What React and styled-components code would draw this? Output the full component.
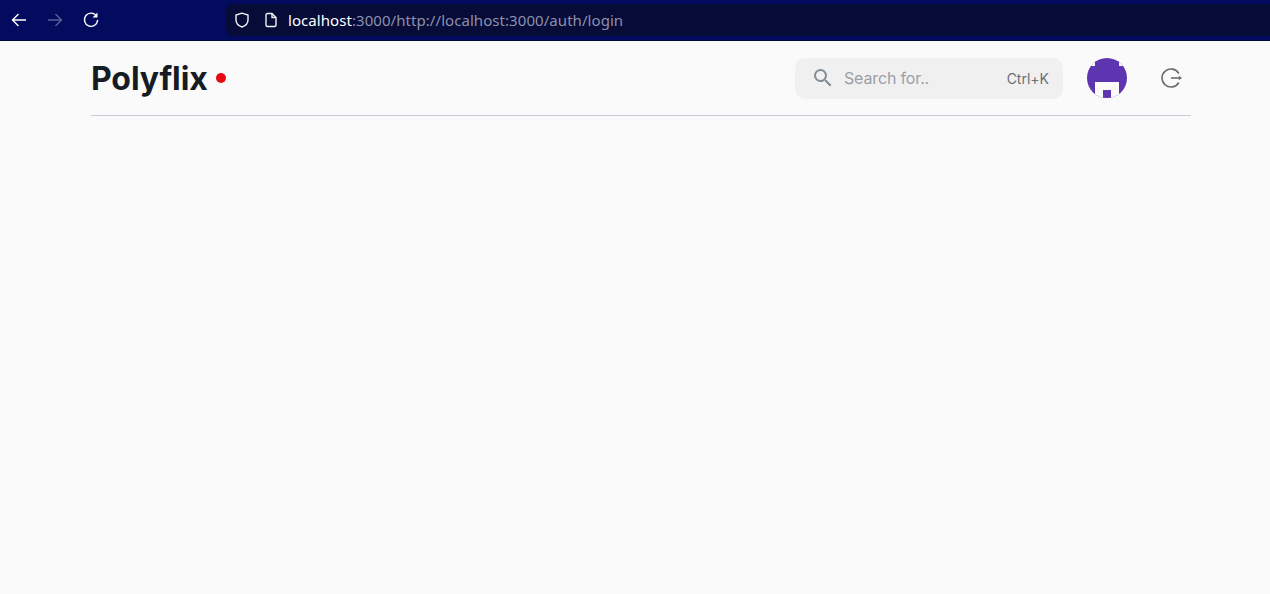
import React from "react";
import styled, { createGlobalStyle } from "styled-components";

const GlobalStyle = createGlobalStyle`
  html, body {
    margin: 0;
    padding: 0;
    height: 100%;
    background: #fafafa;
  }
  #root {
    height: 100%;
  }
`;

const Page = styled.div`
  display: flex;
  flex-direction: column;
  height: 594px;
  overflow: hidden;
  background: #fafafa;
`;

const BrowserBar = styled.div`
  display: flex;
  align-items: center;
  flex-shrink: 0;
  box-sizing: border-box;
  height: 41px;
  padding: 4px 0 4px 0;
  background: #020b5e;
  border-bottom: 1px solid #01063a;
`;

const NavButtons = styled.div`
  display: flex;
  align-items: center;
  gap: 18px;
  width: 226px;
  padding-left: 10px;
  box-sizing: border-box;
`;

const NavIcon = styled.svg`
  display: block;
  width: 18px;
  height: 18px;
  fill: none;
  stroke: ${(p) => (p.$dim ? "#5a5f96" : "#ffffff")};
  stroke-width: 1.4;
`;

const UrlBox = styled.div`
  flex: 1;
  display: flex;
  align-items: center;
  align-self: stretch;
  padding-left: 8px;
  background: #060b38;
  border-radius: 6px 0 0 6px;
`;

const UrlIcon = styled.svg`
  display: block;
  flex-shrink: 0;
  width: 16px;
  height: 16px;
  margin-right: ${(p) => p.$gap}px;
  fill: none;
  stroke: #f2f2f6;
  stroke-width: 1.4;
`;

const UrlText = styled.div`
  font-family: "Noto Sans", "Open Sans", sans-serif;
  font-size: 15px;
  letter-spacing: 0.06px;
  color: #8d90ad;
  white-space: nowrap;
`;

const UrlHost = styled.span`
  color: #ffffff;
`;

const Header = styled.header`
  display: flex;
  align-items: center;
  justify-content: space-between;
  box-sizing: border-box;
  height: 75px;
  margin: 0 79px 0 91px;
  border-bottom: 1px solid #c4cdd5;
`;

const Brand = styled.div`
  display: flex;
  align-items: center;
  gap: 8px;
`;

const Logo = styled.div`
  font-family: "Inter", "Liberation Sans", sans-serif;
  font-size: 32px;
  font-weight: 700;
  letter-spacing: -0.1px;
  color: #161c24;
`;

const Dot = styled.span`
  display: block;
  width: 10px;
  height: 10px;
  border-radius: 50%;
  background: #e50914;
`;

const HeaderRight = styled.div`
  display: flex;
  align-items: center;
`;

const SearchBox = styled.div`
  display: flex;
  align-items: center;
  box-sizing: border-box;
  width: 268px;
  height: 41px;
  padding: 0 14px 0 16px;
  border-radius: 10px;
  background: #f0f0f0;
`;

const SearchIcon = styled.svg`
  display: block;
  flex-shrink: 0;
  width: 24px;
  height: 24px;
  fill: #828d99;
`;

const SearchText = styled.span`
  flex: 1;
  margin-left: 9px;
  font-family: "Inter", "Roboto", sans-serif;
  font-size: 16px;
  letter-spacing: -0.15px;
  color: #9a9fa6;
`;

const Shortcut = styled.span`
  font-family: "Inter", "Roboto", sans-serif;
  font-size: 14px;
  color: #66707a;
`;

const Avatar = styled.svg`
  display: block;
  width: 40px;
  height: 40px;
  margin-left: 24px;
  border-radius: 50%;
`;

const LogoutIcon = styled.svg`
  display: block;
  width: 24px;
  height: 24px;
  margin-left: 33px;
  margin-right: 7px;
  fill: none;
  stroke: #6d6d6d;
  stroke-width: 1.6;
`;

export default function App() {
  return (
    <>
      <GlobalStyle />
      <Page>
        <BrowserBar>
          <NavButtons>
            <NavIcon viewBox="0 0 18 18">
              <path d="M16 9H2.5M8.5 3L2.5 9l6 6" />
            </NavIcon>
            <NavIcon viewBox="0 0 18 18" $dim>
              <path d="M2 9h13.5M9.5 3l6 6-6 6" />
            </NavIcon>
            <NavIcon viewBox="0 0 18 18">
              <path d="M14.6 5.2A6.6 6.6 0 1 0 15.6 9" />
              <path d="M15.5 1.5v5h-5z" fill="#ffffff" stroke="none" />
            </NavIcon>
          </NavButtons>
          <UrlBox>
            <UrlIcon viewBox="0 0 16 16" $gap={13}>
              <path d="M8 1.2L2 3v5c0 3.4 2.6 5.8 6 7 3.4-1.2 6-3.6 6-7V3z" />
            </UrlIcon>
            <UrlIcon viewBox="0 0 16 16" $gap={9}>
              <path d="M3 3a1.5 1.5 0 0 1 1.5-1.5H9L13 5.5V13a1.5 1.5 0 0 1-1.5 1.5h-7A1.5 1.5 0 0 1 3 13z" />
              <path d="M9 1.5v4h4" />
            </UrlIcon>
            <UrlText>
              <UrlHost>localhost</UrlHost>:3000/http://localhost:3000/auth/login
            </UrlText>
          </UrlBox>
        </BrowserBar>
        <Header>
          <Brand>
            <Logo>Polyflix</Logo>
            <Dot />
          </Brand>
          <HeaderRight>
            <SearchBox>
              <SearchIcon viewBox="0 0 24 24">
                <path d="M15.5 14h-.79l-.28-.27A6.47 6.47 0 0 0 16 9.5 6.5 6.5 0 1 0 9.5 16c1.61 0 3.09-.59 4.23-1.57l.27.28v.79l5 4.99L20.49 19l-4.99-5zm-6 0C7.01 14 5 11.99 5 9.5S7.01 5 9.5 5 14 7.01 14 9.5 11.99 14 9.5 14z" />
              </SearchIcon>
              <SearchText>Search for..</SearchText>
              <Shortcut>Ctrl+K</Shortcut>
            </SearchBox>
            <Avatar viewBox="0 0 40 40" shapeRendering="crispEdges">
              <rect width="40" height="40" fill="#5e35b1" />
              <rect x="0" y="0" width="8" height="8" fill="#fafafa" />
              <rect x="32" y="0" width="8" height="8" fill="#fafafa" />
              <rect x="8" y="24" width="24" height="16" fill="#fafafa" />
              <rect x="16" y="32" width="8" height="8" fill="#5e35b1" />
            </Avatar>
            <LogoutIcon viewBox="0 0 24 24">
              <path d="M18.8 7.5A9 9 0 1 0 18.8 16.5" />
              <path d="M11 12h10" />
              <path d="M22 12l-3.2-2.2v4.4z" fill="#6d6d6d" stroke="none" />
            </LogoutIcon>
          </HeaderRight>
        </Header>
      </Page>
    </>
  );
}
